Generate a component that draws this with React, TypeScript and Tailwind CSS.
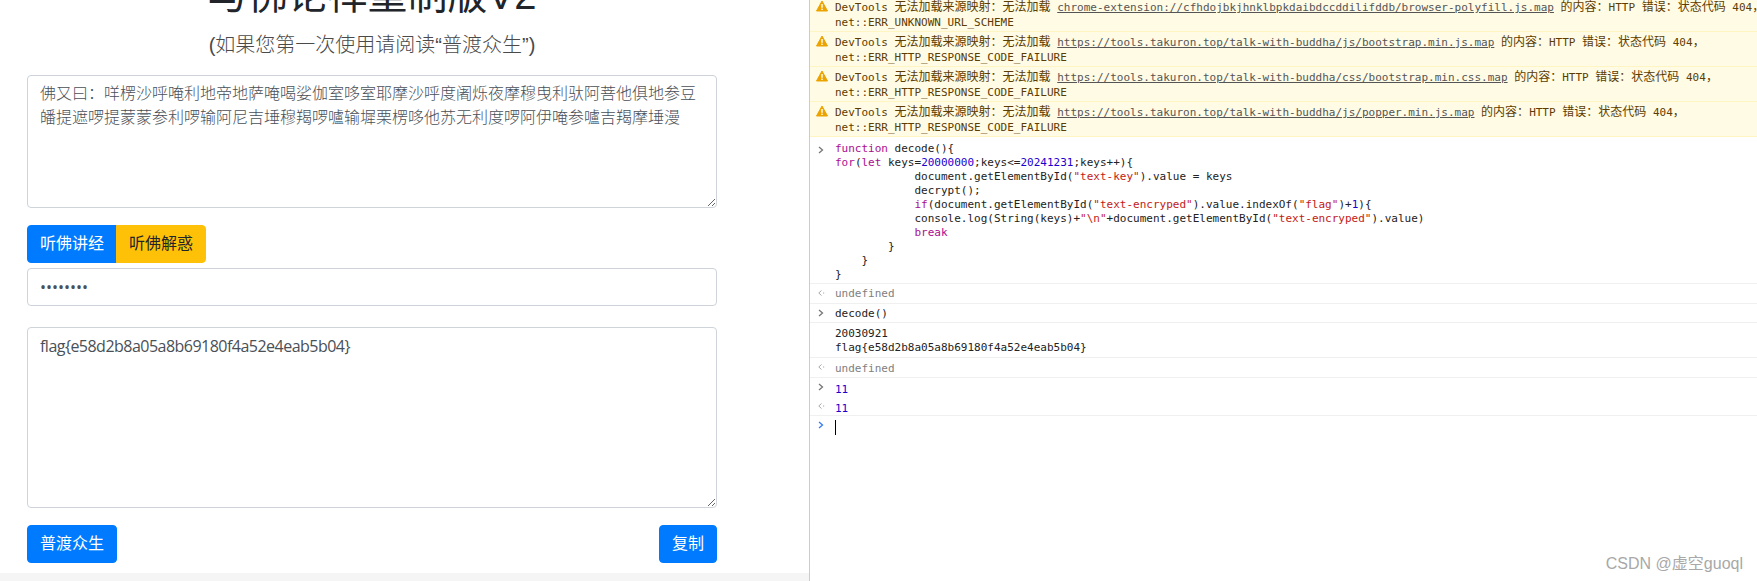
const mono = "font-['DejaVu_Sans_Mono','Noto_Sans_CJK_SC',monospace]";

function Zh({ children }: { children: string }) {
  return <span className="text-[12px]">{children}</span>;
}

function WarnIcon() {
  return (
    <svg viewBox="0 0 12 12" className="absolute left-[6px] top-[3px] h-[12px] w-[12px]">
      <path d="M6 1 L11.5 11 L0.5 11 Z" fill="#eba300" stroke="#eba300" strokeLinejoin="round" />
      <rect x="5.3" y="4" width="1.4" height="3.8" fill="#fff" />
      <rect x="5.3" y="8.6" width="1.4" height="1.4" fill="#fff" />
    </svg>
  );
}

function Warning({ url, second }: { url: string; second: string }) {
  return (
    <div className="relative h-[35px] border-b border-[#fff5c2] bg-[#fffbe5] pl-[25px] pt-[3px] leading-[15px] text-[#5c3c00]">
      <WarnIcon />
      <div className="h-[15px] whitespace-nowrap">
        DevTools <Zh>无法加载来源映射：无法加载</Zh> <span className="text-[#555] underline">{url}</span> <Zh>的内容：</Zh>HTTP <Zh>错误：状态代码</Zh> 404<Zh>，</Zh>
      </div>
      <div className="h-[15px]">{second}</div>
    </div>
  );
}

function InIcon({ active }: { active?: boolean }) {
  return (
    <svg viewBox="0 0 8 8" className="absolute left-[7px] top-[5px] h-[8px] w-[8px]" fill="none">
      <path d="M2 1 L5.5 4 L2 7" stroke={active ? "#367cf1" : "#777"} strokeWidth="1.3" />
    </svg>
  );
}

function OutIcon() {
  return (
    <svg viewBox="0 0 8 8" className="absolute left-[7px] top-[5px] h-[8px] w-[8px]" fill="none">
      <path d="M4.5 1.5 L1.8 4 L4.5 6.5" stroke="#aaa" strokeWidth="1" />
      <rect x="6" y="3.5" width="1.2" height="1" fill="#aaa" />
    </svg>
  );
}

const kw = "text-[#aa0d91]";
const num = "text-[#1c00cf]";
const str = "text-[#c41a16]";

function Code() {
  return (
    <pre className={`${mono} text-[11px] leading-[14px] text-[#222]`}>
      <span className={kw}>function</span> decode(){"{\n"}
      <span className={kw}>for</span>(<span className={kw}>let</span> keys=<span className={num}>20000000</span>;keys{"<="}<span className={num}>20241231</span>;keys++){"{\n"}
      {"            "}document.getElementById(<span className={str}>"text-key"</span>).value = keys{"\n"}
      {"            "}decrypt();{"\n"}
      {"            "}<span className={kw}>if</span>(document.getElementById(<span className={str}>"text-encryped"</span>).value.indexOf(<span className={str}>"flag"</span>)+<span className={num}>1</span>){"{\n"}
      {"            "}console.log(String(keys)+<span className={str}>"\n"</span>+document.getElementById(<span className={str}>"text-encryped"</span>).value){"\n"}
      {"            "}<span className={kw}>break</span>{"\n"}
      {"        }\n"}
      {"    }\n"}
      {"}"}
    </pre>
  );
}

function Console() {
  return (
    <div className={`${mono} min-w-0 flex-1 -mt-[3px] text-[11px] leading-[14px] text-[#222]`}>
      <Warning url="chrome-extension://cfhdojbkjhnklbpkdaibdccddilifddb/browser-polyfill.js.map" second="net::ERR_UNKNOWN_URL_SCHEME" />
      <Warning url="https://tools.takuron.top/talk-with-buddha/js/bootstrap.min.js.map" second="net::ERR_HTTP_RESPONSE_CODE_FAILURE" />
      <Warning url="https://tools.takuron.top/talk-with-buddha/css/bootstrap.min.css.map" second="net::ERR_HTTP_RESPONSE_CODE_FAILURE" />
      <Warning url="https://tools.takuron.top/talk-with-buddha/js/popper.min.js.map" second="net::ERR_HTTP_RESPONSE_CODE_FAILURE" />

      <div className="relative h-[147px] border-b border-[#f0f0f0] pl-[25px] pt-[5px]">
        <div className="absolute left-0 top-[4px] h-[16px] w-[20px]"><InIcon /></div>
        <Code />
      </div>
      <div className="relative h-[20px] border-b border-[#f0f0f0] pl-[25px] pt-[3px] text-[#808080]">
        <OutIcon />undefined
      </div>
      <div className="relative h-[19px] border-b border-[#f0f0f0] pl-[25px] pt-[3px]">
        <InIcon />decode()
      </div>
      <div className="h-[35px] border-b border-[#f0f0f0] pl-[25px] pt-[4px]">
        20030921
        <br />
        flag{"{e58d2b8a05a8b69180f4a52e4eab5b04}"}
      </div>
      <div className="relative h-[20px] border-b border-[#f0f0f0] pl-[25px] pt-[4px] text-[#808080]">
        <OutIcon />undefined
      </div>
      <div className="relative h-[19px] pl-[25px] pt-[5px] text-[#1c00cf]">
        <InIcon />11
      </div>
      <div className="relative h-[19px] border-b border-[#f0f0f0] pl-[25px] pt-[5px] text-[#1c00cf]">
        <OutIcon />11
      </div>
      <div className="relative h-[20px] pl-[25px] pt-[4px]">
        <InIcon active />
        <div className="h-[15px] w-px bg-black" />
      </div>
    </div>
  );
}

const field =
  "block w-full rounded-[4px] border border-[#ced4da] bg-white px-[12px] py-[6px] text-[16px] leading-[24px] text-[#495057] outline-none";
const blueBtn = "h-[38px] border border-[#007bff] bg-[#007bff] px-[12px] text-[16px] text-white";

function Main() {
  return (
    <div className="flex w-[810px] shrink-0 flex-col border-r border-[#ccc]">
      <div className="flex-1 pl-[27px] pr-[92px] font-['Liberation_Sans','Noto_Sans_CJK_SC',sans-serif]">
        <h1 className="-mt-[29px] text-center text-[40px] font-normal leading-[48px] text-[#212529]">与佛论禅重制版V2</h1>
        <p className="mt-[11px] text-center text-[20px] font-light leading-[30px] text-[#4a4a4a]">(如果您第一次使用请阅读“普渡众生”)</p>
        <textarea
          readOnly
          className={`${field} mt-[15px] h-[133px] font-light`}
          value="佛又曰：咩楞沙呼唵利地帝地萨唵喝娑伽室哆室耶摩沙呼度阇烁夜摩穆曳利驮阿菩他俱地参豆皤提遮啰提蒙蒙参利啰输阿尼吉埵穆羯啰嚧输墀栗楞哆他苏无利度啰阿伊唵参嚧吉羯摩埵漫"
        />
        <div className="mt-[17px] flex">
          <button className={`${blueBtn} rounded-l-[4px]`}>听佛讲经</button>
          <button className="-ml-px h-[38px] rounded-r-[4px] border border-[#ffc107] bg-[#ffc107] px-[12px] text-[16px] text-[#212529]">听佛解惑</button>
        </div>
        <input readOnly type="password" value="20030921" className={`${field} mt-[5px] h-[38px] font-['Open_Sans',sans-serif]`} />
        <textarea
          readOnly
          className={`${field} mt-[21px] h-[181px] font-['Open_Sans','Noto_Sans_CJK_SC',sans-serif] tracking-[-0.52px]`}
          value="flag{e58d2b8a05a8b69180f4a52e4eab5b04}"
        />
        <div className="mt-[17px] flex justify-between">
          <button className={`${blueBtn} rounded-[4px]`}>普渡众生</button>
          <button className={`${blueBtn} rounded-[4px]`}>复制</button>
        </div>
      </div>
      <div className="h-[8px] bg-[#f5f5f5]" />
    </div>
  );
}

export default function App() {
  return (
    <div className="relative flex h-[581px] w-[1757px] overflow-hidden bg-white">
      <Main />
      <Console />
      <div className="absolute bottom-[7px] right-[14px] font-['Liberation_Sans','Noto_Sans_CJK_SC',sans-serif] text-[16px] leading-[20px] text-[#a8a8a8]">
        CSDN @虚空guoql
      </div>
    </div>
  );
}
